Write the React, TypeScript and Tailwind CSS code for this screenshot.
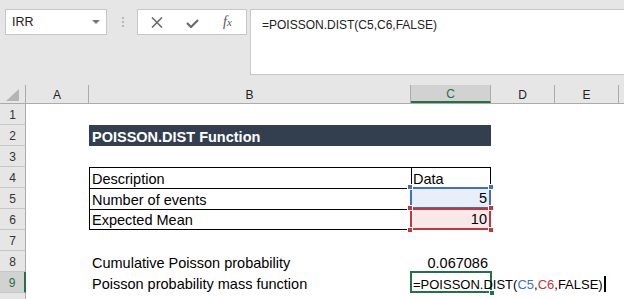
import React from "react";

// column widths: row head, A, B, C, D, E
const COLS = ["A", "B", "C", "D", "E"];
const COL_W = ["w-[63px]", "w-[322px]", "w-[80px]", "w-[64px]", "w-[64px]"];

const Handle = ({ className }: { className: string }) => (
  <div className={`absolute w-[6px] h-[6px] border border-white ${className}`} />
);

const RowHead = ({ n, active }: { n?: number; active?: boolean }) => (
  <div
    className={
      active
        ? "w-[26px] shrink-0 h-full flex items-center justify-center bg-[#d2d2d2] border-b border-[#c6c6c6] border-r-2 border-r-[#217346] text-[#217346] text-[12px] pt-[1px]"
        : "w-[26px] shrink-0 h-full flex items-center justify-center bg-[#e6e6e6] border-b border-[#c6c6c6] border-r border-r-[#ababab] text-[#333] text-[12px] pt-[1px]"
    }
  >
    {n}
  </div>
);

const Row = ({
  n,
  active,
  children,
}: {
  n?: number;
  active?: boolean;
  children?: React.ReactNode;
}) => (
  <div className="flex h-[21px]">
    <RowHead n={n} active={active} />
    {children}
  </div>
);

const Cell = ({
  w,
  className = "",
  children,
}: {
  w: string;
  className?: string;
  children?: React.ReactNode;
}) => (
  <div
    className={`${w} shrink-0 h-full flex items-end leading-[17px] text-[14.5px] text-black whitespace-nowrap ${className}`}
  >
    {children}
  </div>
);

export default function App() {
  return (
    <div className="w-[624px] h-[299px] overflow-hidden bg-white font-['Liberation_Sans',Arial,sans-serif]">
      {/* formula bar strip */}
      <div className="h-[85px] bg-[#e6e6e6] flex items-start pt-[9px] pl-[5px]">
        <div className="w-[102px] h-[26px] bg-white border border-[#c6c6c6] flex items-center justify-between pl-[6px] pr-[6px]">
          <span className="text-[12.5px] text-[#222] leading-none pt-[1px]">IRR</span>
          <svg width="8" height="4" viewBox="0 0 8 4">
            <polygon points="0,0 8,0 4,4" fill="#777" />
          </svg>
        </div>
        <div className="ml-[15px] mt-[8px] flex flex-col gap-[2px]">
          <div className="w-[2px] h-[2px] bg-[#b8b8b8]" />
          <div className="w-[2px] h-[2px] bg-[#b8b8b8]" />
          <div className="w-[2px] h-[2px] bg-[#b8b8b8]" />
        </div>
        <div className="ml-[13px] w-[110px] h-[26px] bg-white border border-[#c6c6c6] flex items-center pl-[13px]">
          <svg width="12" height="11" viewBox="0 0 12 11">
            <path d="M1 0.5 L11 10.5 M11 0.5 L1 10.5" stroke="#6b6b6b" strokeWidth="1.6" />
          </svg>
          <svg className="ml-[23px] mt-[2px]" width="13" height="9" viewBox="0 0 13 9">
            <path d="M1 4 L5 8 L12 1" stroke="#6b6b6b" strokeWidth="2.2" fill="none" />
          </svg>
          <span className="ml-[24px] font-['Liberation_Serif',serif] italic text-[14px] text-[#555] leading-none">
            f<span className="text-[11px]">x</span>
          </span>
        </div>
        <div className="ml-[3px] flex-1 h-[66px] bg-white border border-[#c6c6c6] border-r-0 pl-[11px] pt-[8px] text-[12px] leading-[14px] text-[#222]">
          =POISSON.DIST(C5,C6,FALSE)
        </div>
      </div>

      {/* column headers */}
      <div className="flex h-[19px] bg-[#e6e6e6] border-b border-[#ababab]">
        <div className="w-[26px] shrink-0 h-full border-r border-[#ababab] flex items-end justify-center pb-[2px]">
          <svg width="13" height="12" viewBox="0 0 13 12">
            <polygon points="13,0 13,12 0,12" fill="#b5b5b5" />
          </svg>
        </div>
        {COLS.map((c, i) => (
          <div
            key={c}
            className={
              c === "C"
                ? `${COL_W[i]} shrink-0 h-full bg-[#d2d2d2] border-r border-[#ababab] border-b-2 border-b-[#217346] flex items-center justify-center text-[12px] text-[#217346] pt-[1px]`
                : `${COL_W[i]} shrink-0 h-full border-r border-[#ababab] flex items-center justify-center text-[12px] text-[#222] pt-[2px]`
            }
          >
            {c}
          </div>
        ))}
      </div>

      <Row n={1} />
      <Row n={2}>
        <Cell w="w-[63px]" />
        <Cell w="w-[402px]" className="bg-[#333f4f] pl-[3px] font-bold text-[13.3px] text-white">
          <span className="text-white">POISSON.DIST Function</span>
        </Cell>
      </Row>
      <Row n={3} />
      <Row n={4}>
        <Cell w="w-[63px]" />
        <Cell w="w-[322px]" className="border-l border-t border-black pl-[2px]">
          Description
        </Cell>
        <Cell w="w-[80px]" className="border-l border-t border-r border-black pl-[1px]">
          Data
        </Cell>
      </Row>
      <Row n={5}>
        <Cell w="w-[63px]" />
        <Cell w="w-[322px]" className="border-l border-t border-black pl-[2px]">
          Number of events
        </Cell>
        <div className="relative w-[80px] h-full shrink-0">
          <div className="absolute -left-[1px] -top-[1px] w-[81px] h-[22px] bg-[#e8eff9] border-2 border-[#3f6fc6] flex items-end justify-end pr-[2px] text-[14.5px] leading-[17px]">
            5
          </div>
          <Handle className="bg-[#3f6fc6] -left-[4px] -top-[4px]" />
          <Handle className="bg-[#3f6fc6] -right-[3px] -top-[4px]" />
        </div>
      </Row>
      <Row n={6}>
        <Cell w="w-[63px]" />
        <Cell w="w-[322px]" className="border-l border-t border-b border-black pl-[2px]">
          Expected Mean
        </Cell>
        <div className="relative w-[80px] h-full shrink-0 z-10">
          <div className="absolute -left-[1px] -top-[1px] w-[81px] h-[22px] bg-[#f9e8e8] border-2 border-[#c0373d] flex items-end justify-end pr-[2px] text-[14.5px] leading-[17px]">
            10
          </div>
          <Handle className="bg-[#c0373d] -left-[4px] -top-[4px]" />
          <Handle className="bg-[#c0373d] -right-[3px] -top-[4px]" />
          <Handle className="bg-[#c0373d] -left-[4px] -bottom-[3px]" />
          <Handle className="bg-[#c0373d] -right-[3px] -bottom-[3px]" />
        </div>
      </Row>
      <Row n={7} />
      <Row n={8}>
        <Cell w="w-[63px]" />
        <Cell w="w-[322px]" className="pl-[3px]">
          Cumulative Poisson probability
        </Cell>
        <Cell w="w-[80px]" className="justify-end pr-[3px]">
          0.067086
        </Cell>
      </Row>
      <Row n={9} active>
        <Cell w="w-[63px]" />
        <Cell w="w-[322px]" className="pl-[3px]">
          Poisson probability mass function
        </Cell>
        <div className="relative w-[80px] h-full shrink-0">
          <div className="absolute -left-[1px] -top-[1px] w-[82px] h-[22px] border-2 border-[#217346]" />
          <Handle className="bg-[#217346] -right-[4px] -bottom-[3px]" />
          <div className="absolute left-[2px] bottom-0 flex items-end whitespace-nowrap text-[13px] leading-[17px] text-black">
            <span>=POISSON.DIST(</span>
            <span className="text-[#3f6fc6]">C5</span>
            <span>,</span>
            <span className="text-[#c0373d]">C6</span>
            <span>,FALSE)</span>
            <span className="ml-[1px] mb-[1px] w-[2px] h-[16px] bg-black" />
          </div>
        </div>
      </Row>
      <Row />
    </div>
  );
}
